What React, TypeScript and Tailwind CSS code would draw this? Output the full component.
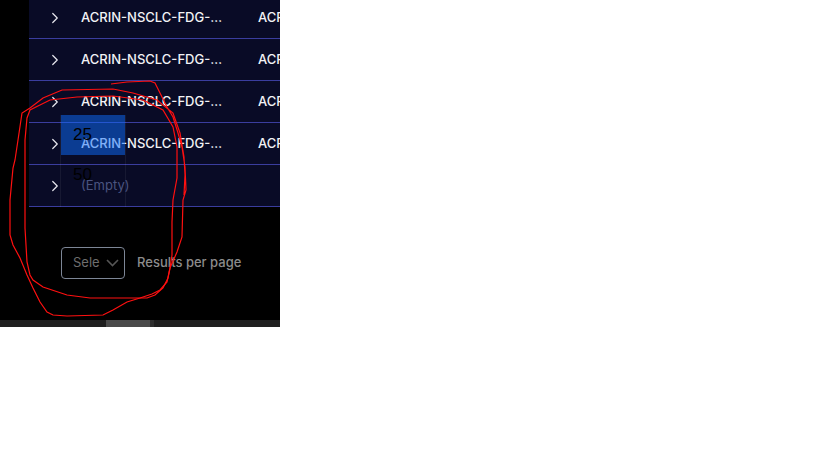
import { ChevronRight } from "lucide-react";

const rows = [
  "ACRIN-NSCLC-FDG-PET",
  "ACRIN-NSCLC-FDG-PET",
  "ACRIN-NSCLC-FDG-PET",
  "ACRIN-NSCLC-FDG-PET",
];

const scribbleA =
  "111,84 127,82 150,81 155,83 160,93 167,107 173,117 178,133 182,147 185,167 186,190 183,200 182,237 177,252 170,268 167,282 160,290 152,294 140,298 127,302 113,310 103,315 67,316 53,315 47,312 40,302 33,288 27,275 20,258 13,245 10,235 10,200 13,168 15,160 18,140 22,113 30,108 43,98 62,90 113,89 133,93 157,100 173,113 180,133 184,157 185,175 184,195";

const scribbleB =
  "177,170 177,147 173,127 163,110 143,100 113,96 77,97 50,100 30,110 27,118 25,140 25,195 25,228 27,262 30,275 33,280 43,287 67,295 90,298 147,298 155,295 163,288 168,278 170,268 172,255 172,222 173,200 177,178 177,170";

function Row({ label, empty }: { label: string; empty?: boolean }) {
  return (
    <div className="flex h-[42px] items-center border-b border-[#3a3d9e] bg-[#090b26]">
      <ChevronRight
        className="ml-[17px] h-[18px] w-[18px] shrink-0 text-[#e8e8ef]"
        strokeWidth={1.6}
      />
      {empty ? (
        <span className="ml-[17px] text-[13px] text-[#4a5480]">{label}</span>
      ) : (
        <>
          <span className="ml-[17px] w-[141px] shrink-0 truncate text-[13px] font-medium text-[#f2f2f5]">
            {label}
          </span>
          <span className="ml-[36px] whitespace-nowrap text-[13px] font-medium text-[#f2f2f5]">
            {label}
          </span>
        </>
      )}
    </div>
  );
}

export default function App() {
  return (
    <div className="relative h-[460px] w-[819px] bg-white font-['Inter',sans-serif]">
      <div className="flex w-[280px] flex-col bg-black">
        <div className="flex h-[320px] overflow-hidden">
          <div className="w-[29px] shrink-0" />
          <div className="flex-1 overflow-hidden">
            <div className="-mt-[3px] w-[600px]">
              {rows.map((r, i) => (
                <Row key={i} label={r} />
              ))}
              <Row label="(Empty)" empty />
            </div>
            <div className="mt-[40px] flex items-center pl-[32px]">
              <div className="flex h-[32px] w-[64px] items-center overflow-hidden rounded-[4px] border border-[#7d8696] pl-[11px]">
                <span className="text-[13px] text-[#6e6e6e]">Sele</span>
                <svg className="ml-[6px] shrink-0" width="13" height="8" viewBox="0 0 13 8">
                  <path d="M1 1l5.5 5.5L12 1" fill="none" stroke="#565656" strokeWidth="1.6" />
                </svg>
              </div>
              <span className="ml-[12px] text-[13px] font-medium text-[#8c8c8c]">
                Results per page
              </span>
            </div>
          </div>
        </div>
        <div className="flex h-[7px] bg-[#1f1f1f]">
          <div className="w-[106px]" />
          <div className="w-[44px] bg-[#4a4a4a]" />
          <div className="w-[4px] bg-[#2e2e2e]" />
        </div>
      </div>

      <div className="absolute left-[60px] top-[115px] flex h-[92px] w-[66px] flex-col border-x border-white/[0.06] font-['Liberation_Sans',sans-serif]">
        <div className="flex h-[40px] items-center bg-[#0d6efd]/50 pl-[12px] text-[17px] text-black">
          25
        </div>
        <div className="flex h-[40px] items-center pl-[12px] text-[17px] text-black">
          50
        </div>
      </div>

      <svg className="pointer-events-none absolute left-0 top-0" width="819" height="460">
        <polyline points={scribbleA} fill="none" stroke="#ff1010" strokeWidth="1.2" />
        <polyline points={scribbleB} fill="none" stroke="#ff1010" strokeWidth="1.2" />
      </svg>
    </div>
  );
}
